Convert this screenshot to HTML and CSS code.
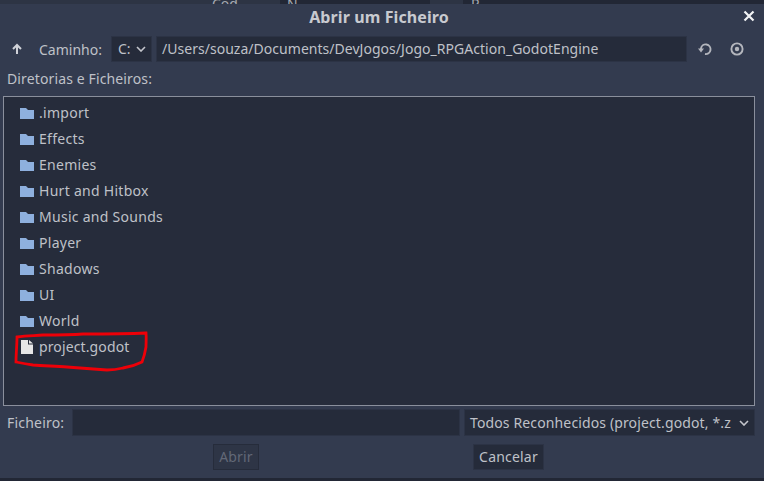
FILE: index.html
```html
<!DOCTYPE html>
<html lang="pt">
<head>
    <meta charset="UTF-8">
    <meta name="viewport" content="width=device-width, initial-scale=1.0">
    <title>Abrir um Ficheiro</title>
    <link rel="stylesheet" href="styles.css">
</head>
<body>

<!-- Editor por tras do dialogo -->
<div class="behind">
    <div class="behind-seg seg-1"><span>Cod</span></div>
    <div class="behind-seg seg-2"><span>N</span></div>
    <div class="behind-seg seg-3"></div>
    <div class="behind-seg seg-4"><span>P</span></div>
</div>

<div class="dialog">
    <div class="title-bar">
        <span class="title">Abrir um Ficheiro</span>
        <svg class="close-icon" width="12" height="12" viewBox="0 0 12 12"><path d="M1.500 1.500 L10.500 10.500 M10.500 1.500 L1.500 10.500" stroke="#f2f3f5" stroke-width="2.200" fill="none"/></svg>
    </div>

    <div class="path-row">
        <svg class="up-icon" width="12" height="12" viewBox="0 0 12 12"><path d="M6 11 V2.500 M2 6 L6 2 L10 6" stroke="#d0d2d8" stroke-width="2" fill="none"/></svg>
        <span class="path-label">Caminho:</span>
        <div class="select drive">C:
            <svg class="chevron" width="10" height="6" viewBox="0 0 10 6"><path d="M1 1 L5 5 L9 1" stroke="#c4c6cc" stroke-width="1.600" fill="none"/></svg>
        </div>
        <div class="input path">/Users/souza/Documents/DevJogos/Jogo_RPGAction_GodotEngine</div>
        <svg class="reload-icon" width="14" height="14" viewBox="0 0 14 14"><path d="M3 7 V6.500 A4.800 4.800 0 1 1 7 12" stroke="#b4b6bd" stroke-width="1.900" fill="none"/><path d="M0 6.500 H6 L3 10.500 Z" fill="#b4b6bd"/></svg>
        <svg class="eye-icon" width="16" height="14" viewBox="0 0 16 14"><circle cx="8" cy="7" r="5.600" stroke="#b4b6bd" stroke-width="1.900" fill="none"/><circle cx="8" cy="7" r="2.200" fill="#b4b6bd"/></svg>
    </div>

    <div class="tree-label">Diretorias e Ficheiros:</div>

    <div class="tree">
        <div class="tree-item"><svg class="folder" width="14" height="12" viewBox="0 0 14 12"><path d="M0 1 H6 L8 3 H14 V12 H0 Z" fill="#8eb0de"/></svg>.import</div>
        <div class="tree-item"><svg class="folder" width="14" height="12" viewBox="0 0 14 12"><path d="M0 1 H6 L8 3 H14 V12 H0 Z" fill="#8eb0de"/></svg>Effects</div>
        <div class="tree-item"><svg class="folder" width="14" height="12" viewBox="0 0 14 12"><path d="M0 1 H6 L8 3 H14 V12 H0 Z" fill="#8eb0de"/></svg>Enemies</div>
        <div class="tree-item"><svg class="folder" width="14" height="12" viewBox="0 0 14 12"><path d="M0 1 H6 L8 3 H14 V12 H0 Z" fill="#8eb0de"/></svg>Hurt and Hitbox</div>
        <div class="tree-item"><svg class="folder" width="14" height="12" viewBox="0 0 14 12"><path d="M0 1 H6 L8 3 H14 V12 H0 Z" fill="#8eb0de"/></svg>Music and Sounds</div>
        <div class="tree-item"><svg class="folder" width="14" height="12" viewBox="0 0 14 12"><path d="M0 1 H6 L8 3 H14 V12 H0 Z" fill="#8eb0de"/></svg>Player</div>
        <div class="tree-item"><svg class="folder" width="14" height="12" viewBox="0 0 14 12"><path d="M0 1 H6 L8 3 H14 V12 H0 Z" fill="#8eb0de"/></svg>Shadows</div>
        <div class="tree-item"><svg class="folder" width="14" height="12" viewBox="0 0 14 12"><path d="M0 1 H6 L8 3 H14 V12 H0 Z" fill="#8eb0de"/></svg>UI</div>
        <div class="tree-item"><svg class="folder" width="14" height="12" viewBox="0 0 14 12"><path d="M0 1 H6 L8 3 H14 V12 H0 Z" fill="#8eb0de"/></svg>World</div>
        <div class="tree-item tree-file"><svg class="file" width="12" height="14" viewBox="0 0 12 14"><path d="M0 0 H7 V4.500 H12 V14 H0 Z M8 0 L12 3.500 H8 Z" fill="#e6e6e6"/></svg>project.godot</div>
    </div>

    <div class="file-row">
        <span class="file-label">Ficheiro:</span>
        <div class="input file-name"></div>
        <div class="select filter"><span class="filter-text">Todos Reconhecidos (project.godot, *.z</span>
            <svg class="chevron" width="10" height="6" viewBox="0 0 10 6"><path d="M1 1 L5 5 L9 1" stroke="#c4c6cc" stroke-width="1.600" fill="none"/></svg>
        </div>
    </div>

    <div class="button-row">
        <div class="btn btn-disabled">Abrir</div>
        <div class="btn btn-cancel">Cancelar</div>
    </div>
</div>

<!-- Marca vermelha a mao sobre a captura -->
<svg class="scribble" width="764" height="481" viewBox="0 0 764 481"><path d="M17 337 C28 335 36 336 43 335 C60 335 70 335 83 334 C105 334 125 334 146 333 C146.500 338 146 342 146 347 C145 353 144 357 142 362 C136 365 130 367 123 368 C117 369.500 112 370 107 370 C92 369 80 368 67 367 C55 366 44 366 33 365 C26 364 21 363 16 362 C16 354 17 345 17 337 Z" stroke="#ee0008" stroke-width="2.800" fill="none"/></svg>

</body>
</html>
```

FILE: styles.css
```css
html, body {
    height: 100%;
}
body {
    margin: 0;
    background-color: #222735;
    color: #bfc1c8;
    font-family: "Noto Sans", sans-serif;
    font-size: 14px;
    overflow: hidden;
}
svg {
    display: block;
    flex: none;
}
.behind {
    height: 4px;
    display: flex;
    overflow: hidden;
    color: #a6a9b1;
    line-height: 20px;
}
.behind-seg {
    height: 4px;
    overflow: hidden;
}
.behind-seg span {
    display: block;
    margin-top: -6px;
}
.seg-1 {
    width: 280px;
    padding-left: 212px;
    box-sizing: border-box;
    background-color: #2d3444;
}
.seg-2 {
    width: 150px;
    padding-left: 7px;
    box-sizing: border-box;
    background-color: #222735;
}
.seg-3 {
    width: 33px;
    background-color: #2d3444;
}
.seg-4 {
    flex: 1;
    padding-left: 8px;
    background-color: #222735;
}
.dialog {
    height: 474px;
    background-color: #333b4f;
    box-sizing: border-box;
    display: flex;
    flex-direction: column;
}
.title-bar {
    height: 32px;
    display: flex;
    align-items: center;
    justify-content: center;
    position: relative;
}
.title {
    font-size: 16px;
    font-weight: bold;
    letter-spacing: 0.1px;
    color: #c8cad0;
    margin: -6px 0 0 -6px;
}
.close-icon {
    position: absolute;
    left: 743px;
    top: 6px;
}
.path-row {
    height: 26px;
    display: flex;
    align-items: center;
}
.up-icon {
    margin-left: 11px;
}
.path-label {
    margin-left: 16px;
    width: 72px;
}
.select, .input, .btn {
    height: 26px;
    box-sizing: border-box;
    background-color: #252b3a;
    border: 1px solid #2c3345;
    color: #bfc1c8;
    line-height: 24px;
}
.select {
    display: flex;
    align-items: center;
    justify-content: space-between;
    padding: 0 5px 0 6px;
}
.drive {
    width: 41px;
}
.path {
    width: 531px;
    margin-left: 4px;
    padding-left: 5px;
    letter-spacing: 0.03px;
}
.reload-icon {
    margin-left: 11px;
}
.eye-icon {
    margin-left: 17px;
}
.tree-label {
    height: 34px;
    line-height: 34px;
    padding-left: 7px;
    letter-spacing: 0.13px;
}
.tree {
    margin-left: 3px;
    width: 752px;
    height: 310px;
    box-sizing: border-box;
    background-color: #262c3b;
    border: 1px solid #8a8f9c;
    padding-top: 3px;
}
.tree-item {
    height: 26px;
    display: flex;
    align-items: center;
    padding-left: 16px;
    line-height: 26px;
    letter-spacing: 0.28px;
}
.tree-file {
    letter-spacing: 0.12px;
}
.folder {
    margin-right: 5px;
}
.file {
    margin: 0 6px 0 1px;
}
.file-row {
    margin-top: 3px;
    height: 27px;
    display: flex;
    align-items: center;
    padding-left: 7px;
    letter-spacing: 0.2px;
}
.file-label {
    width: 65px;
}
.file-name {
    width: 388px;
    height: 27px;
}
.filter {
    width: 291px;
    height: 27px;
    margin-left: 4px;
    white-space: nowrap;
    letter-spacing: 0.13px;
    padding-left: 5px;
}
.button-row {
    margin-top: 8px;
    display: flex;
    padding-left: 213px;
    letter-spacing: 0.2px;
}
.btn {
    text-align: center;
}
.btn-disabled {
    width: 46px;
    background-color: #2e3546;
    border-color: #262c3b;
    color: #626877;
    margin-right: 214px;
}
.btn-cancel {
    width: 71px;
}
.scribble {
    position: absolute;
    left: 0;
    top: 0;
    pointer-events: none;
}
```
